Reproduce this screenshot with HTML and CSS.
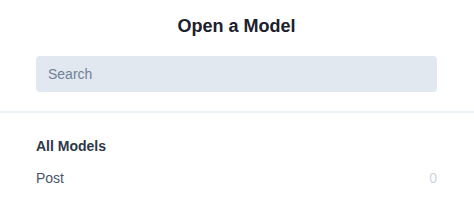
FILE: index.html
```html
<!DOCTYPE html>
<html lang="en">
<head>
    <meta charset="UTF-8">
    <title>Open a Model</title>
    <link rel="stylesheet" href="styles.css">
</head>
<body>
    <div class="modal">
        <div class="modal-header">
            <h1>Open a Model</h1>
            <input class="search" type="text" placeholder="Search">
        </div>
        <div class="modal-body">
            <h2>All Models</h2>
            <ul class="model-list">
                <li><span>Post</span><span class="count">0</span></li>
            </ul>
        </div>
    </div>
</body>
</html>
```

FILE: styles.css
```css
body {
    margin: 0;
    font-family: "Liberation Sans", Arial, sans-serif;
    background: #fff;
    color: #1a202c;
}
.modal-header {
    padding: 15px 37px 19px 36px;
    border-bottom: 2px solid #edf2f7;
}
.modal-header h1 {
    margin: 0 0 19px;
    text-align: center;
    font-size: 18px;
    line-height: 22px;
    font-weight: bold;
}
.search {
    display: block;
    box-sizing: border-box;
    width: 100%;
    height: 36px;
    padding: 0 12px;
    border: none;
    border-radius: 4px;
    background: #e2e8f0;
    font-family: inherit;
    font-size: 14px;
    color: #4a5568;
    outline: none;
}
.search::placeholder {
    color: #718096;
}
.modal-body {
    padding: 24px 37px 0 36px;
}
.modal-body h2 {
    margin: 0 0 14px;
    font-size: 14px;
    line-height: 18px;
    color: #2d3748;
}
.model-list {
    list-style: none;
    margin: 0;
    padding: 0;
}
.model-list li {
    display: flex;
    justify-content: space-between;
    font-size: 14px;
    line-height: 18px;
    color: #4a5568;
}
.model-list .count {
    color: #cbd5e0;
}
```
